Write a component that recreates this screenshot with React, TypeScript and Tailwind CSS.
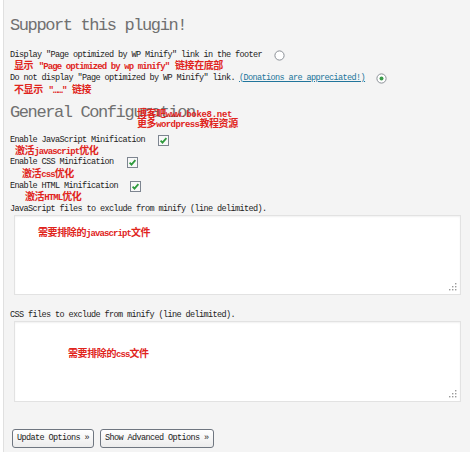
import React from 'react';

const mono = "font-['Liberation_Mono','Noto_Sans_CJK_SC',monospace]";
const small = `${mono} text-[8.5px] tracking-[-0.6px] text-[#222]`;
const red = "font-['Liberation_Mono','Noto_Sans_CJK_SC',monospace] text-[10px] font-bold text-[#e0241c] tracking-[-0.4px]";
const a = "text-[9px] tracking-[-0.9px]";

const Radio: React.FC<{ checked?: boolean }> = ({ checked }) => (
  <svg width="11" height="11" viewBox="0 0 11 11" className="shrink-0">
    <circle cx="5.5" cy="5.5" r="4.6" fill="#fff" stroke="#8a8f96" strokeWidth="1" />
    {checked && <circle cx="5.5" cy="5.5" r="2" fill="#3a9a4a" />}
  </svg>
);

const Check: React.FC = () => (
  <svg width="11" height="11" viewBox="0 0 11 11" className="shrink-0">
    <rect x="0.5" y="0.5" width="10" height="10" fill="#f8f8f8" stroke="#7d8590" />
    <path d="M2.6 5.6 L4.5 7.6 L8.4 3.2" fill="none" stroke="#2e9a3c" strokeWidth="1.8" />
  </svg>
);

const Grip: React.FC = () => (
  <svg width="9" height="9" viewBox="0 0 9 9" className="absolute right-[3px] bottom-[3px]">
    {[[7, 1], [4, 4], [7, 4], [1, 7], [4, 7], [7, 7]].map(([x, y], i) => (
      <rect key={i} x={x} y={y} width="1.4" height="1.4" fill="#9a9a9a" />
    ))}
  </svg>
);

const Box: React.FC<{ height: string; children: React.ReactNode }> = ({ height, children }) => (
  <div className={`relative ml-[4px] w-[447px] ${height} bg-white border border-[#e2e2e2] shadow-[inset_0_1px_2px_rgba(0,0,0,0.06)]`}>
    {children}
    <Grip />
  </div>
);

const Button: React.FC<{ label: string }> = ({ label }) => (
  <button className={`h-[19px] px-[4px] rounded-[3px] border border-[#6f7680] bg-gradient-to-b from-white to-[#ececec] ${small} text-[#222]`}>
    {label}
  </button>
);

export default function App() {
  return (
    <div className="w-[474px] h-[458px] bg-white">
      <div className="relative ml-[3px] w-[467px] h-[452px] bg-[#f4f4f4] border-l border-[#e0e0e0] pl-[6px] flex flex-col">
        <div className="h-[14px]" />
        <h2 className={`${mono} h-[24px] leading-[24px] text-[17px] tracking-[-1.4px] text-[#707070] font-normal`}>
          Support this plugin!
        </h2>
        <div className={`mt-[11px] h-[12px] flex items-center ${small}`}>
          <span>Display "Page optimized by WP Minify" link in the footer</span>
          <span className="ml-[12px]"><Radio /></span>
        </div>
        <div className={`h-[12px] leading-[12px] pl-[4px] ${red}`}>
          显示 <span className={a}>"Page optimized by wp minify"</span> 链接在底部
        </div>
        <div className={`h-[10px] flex items-center ${small}`}>
          <span>Do not display "Page optimized by WP Minify" link.</span>
          <span className="ml-[4px] text-[#21759b] underline">(Donations are appreciated!)</span>
          <span className="ml-[11px]"><Radio checked /></span>
        </div>
        <div className={`mt-[1px] h-[14px] leading-[14px] pl-[4px] ${red}`}>
          不显示 <span className={a}>"……"</span> 链接
        </div>
        <div className="relative mt-[3px] h-[24px]">
          <h2 className={`${mono} leading-[24px] text-[17px] tracking-[-1.4px] text-[#707070] font-normal`}>
            General Configuration
          </h2>
          {/* watermark annotation laid over the heading */}
          <div className={`absolute left-[127px] top-[9px] leading-[10px] ${red} text-[9px]`}>
            <div>博客吧<span className="text-[9px] tracking-[-0.3px]">www.boke8.net</span></div>
            <div>更多<span className="text-[9px] tracking-[-0.6px]">wordpress</span>教程资源</div>
          </div>
        </div>
        <div className={`mt-[10px] h-[11px] flex items-center ${small}`}>
          <span>Enable JavaScript Minification</span>
          <span className="ml-[13px]"><Check /></span>
        </div>
        <div className={`h-[11px] leading-[11px] pl-[5px] ${red}`}>
          激活<span className={a}>javascript</span>优化
        </div>
        <div className={`h-[11px] flex items-center ${small}`}>
          <span>Enable CSS Minification</span>
          <span className="ml-[13px]"><Check /></span>
        </div>
        <div className={`mt-[1px] h-[12px] leading-[12px] pl-[12px] ${red}`}>
          激活<span className={a}>css</span>优化
        </div>
        <div className={`h-[11px] flex items-center ${small}`}>
          <span>Enable HTML Minification</span>
          <span className="ml-[12px]"><Check /></span>
        </div>
        <div className={`h-[12px] leading-[12px] pl-[15px] ${red}`}>
          激活<span className={a}>HTML</span>优化
        </div>
        <div className={`h-[10px] leading-[10px] ${small}`}>
          JavaScript files to exclude from minify (line delimited).
        </div>
        <div className="mt-[1px]">
          <Box height="h-[80px]">
            <div className={`pl-[23px] pt-[10px] ${red}`}>
              需要排除的<span className={a}>javascript</span>文件
            </div>
          </Box>
        </div>
        <div className={`mt-[15px] h-[10px] leading-[10px] ${small}`}>
          CSS files to exclude from minify (line delimited).
        </div>
        <div className="mt-[1px]">
          <Box height="h-[81px]">
            <div className={`pl-[53px] pt-[25px] ${red}`}>
              需要排除的<span className={a}>css</span>文件
            </div>
          </Box>
        </div>
        <div className="mt-[27px] ml-[2px] flex gap-[6px]">
          <Button label="Update Options »" />
          <Button label="Show Advanced Options »" />
        </div>
      </div>
    </div>
  );
}
